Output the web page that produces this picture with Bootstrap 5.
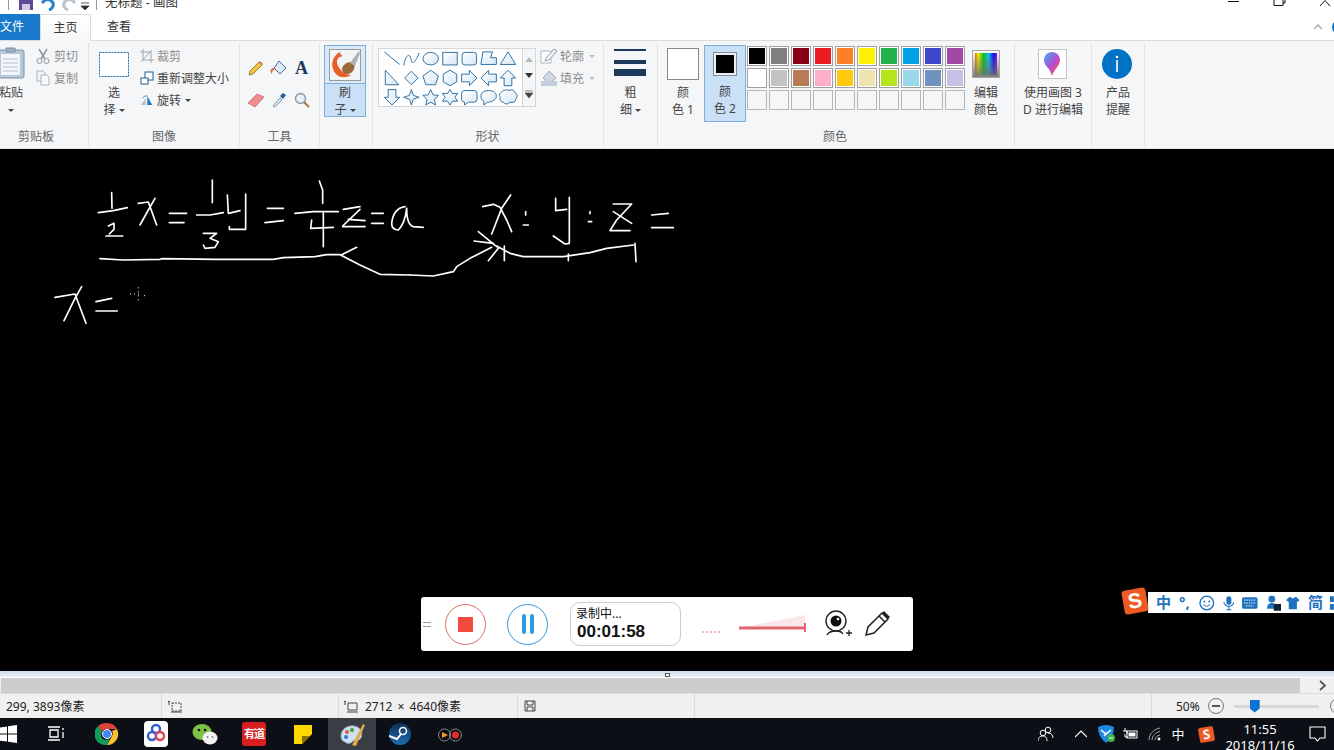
<!DOCTYPE html>
<html lang="zh">
<head>
<meta charset="utf-8">
<title>无标题 - 画图</title>
<link href="https://cdn.jsdelivr.net/npm/bootstrap@5.3.0/dist/css/bootstrap.min.css" rel="stylesheet">
<style>
html,body{height:100%;margin:0;overflow:hidden;background:#000}
body{font-family:"Noto Sans","Noto Sans CJK SC",sans-serif;font-size:12px;color:#444;line-height:17px}
.app{width:1334px;height:750px;overflow:hidden}
.ttl{height:14px;background:#fff;overflow:hidden;flex:none;position:relative}
.ttl-in{margin-top:-9px;height:23px}
.ttl-txt{font-size:12.500px;color:#333;margin-left:8px}
.vbar{width:1px;height:14px;background:#999}
.tabs{height:27px;background:#fff;border-bottom:1px solid #dadbdc;flex:none}
.tb{font-size:12px;height:26px;line-height:26px;text-align:center}
.tb-file{width:40px;background:#1979ca;color:#fff;padding-right:16px;white-space:nowrap}
.tb-home{width:51px;height:27px;background:linear-gradient(#fff,#f5f6f7);border:1px solid #dadbdc;border-bottom:0;color:#333}
.tb-view{margin-left:16px;color:#333}
.rib{height:108px;background:#f5f6f7;flex:none;border-bottom:1px solid #e4e5e6}
.grp{flex:none;height:103px;margin-top:2px;border-right:1px solid #e1e2e3;overflow:visible}
.grp-b{flex:1 1 auto;padding-top:3px;min-height:0}
.grp-l{height:24px;line-height:24px;text-align:center;color:#666;flex:none;margin-bottom:-3px}
.lg{display:flex;flex-direction:column;align-items:center;flex:none}
.lg-i{height:38px;display:flex;align-items:flex-start;justify-content:center;flex:none}
.lg-t{line-height:17px;text-align:center;white-space:nowrap}
.drop{display:inline-block;width:0;height:0;border:3px solid transparent;border-top:3px solid #444;border-bottom:0;margin-left:3px;vertical-align:2px}
.drop-g{border-top-color:#bbb}
.sc{margin-top:-1px}
.si{height:22px;display:flex;align-items:center;gap:4px;white-space:nowrap}
.dis{color:#8d8d8d}
.tgrid{display:grid;grid-template-columns:repeat(3,23px);grid-auto-rows:32px;padding:6px 0 0 4px}
.tgrid>div{display:flex;align-items:center;justify-content:center}
.ab-a{font-family:"Liberation Serif",serif;font-weight:700;font-size:18px;color:#1f3a5f;line-height:20px}
.sel-btn{background:#c9e0f7;border:1px solid #7fb0dc;height:72px;width:42px;margin:2px 0 0 4px}
.sel-top{height:38px;background:#d9e9f9;border-bottom:1px solid #7fb0dc;display:flex;align-items:center;justify-content:center}
.gal{margin:2px 0 0 5px;height:59px;border:1px solid #d4d6d8;background:#fff;flex:none;display:flex}
.gal-s{width:13px;background:#f5f6f7;border-left:1px solid #d4d6d8;display:flex;flex-direction:column;align-items:center;justify-content:space-around;padding:2px 0}
.c1-col{width:42px;margin-left:4px}
.c1-box{width:32px;height:32px;border:1px solid #8a8a8a;background:#fff;margin-top:2px}
.c2-btn{background:#c9e0f7;border:1px solid #7fb0dc;width:42px;height:77px;margin-top:-1px}
.c2-btn .lg-i{height:37px}
.c2-box{width:24px;height:24px;border:1px solid #8a8a8a;background:#000;box-shadow:inset 0 0 0 2px #e8f0f8;margin-top:6px}
.pal{display:grid;grid-template-columns:repeat(10,20px);grid-auto-rows:20px;gap:2px;margin:0 0 0 1px}
.sw{border:1px solid #a0a0a0;box-shadow:inset 0 0 0 1px #fff}
.sw-e{border:1px solid #b4b4b4;background:#f5f6f7;box-shadow:none}
.rb-box{width:28px;height:28px;border:1px solid #a5a5a5;margin-top:4px;background:linear-gradient(90deg,#f00,#ff0,#0c0,#0cf,#00f,#f0f);position:relative;box-shadow:inset 0 0 0 2px #fff}
.rb-sh{display:block;width:100%;height:100%;background:linear-gradient(rgba(255,255,255,0),rgba(110,110,110,.9))}
.p3-box{width:29px;height:30px;border:1px solid #c4c4c4;background:#fff;margin:3px 2px 0 0}
.cv{flex:1 1 auto;background:#000;position:relative;min-height:0}
.cv svg.ink{display:block}
.ink path{fill:none;stroke:#fff;stroke-width:5;stroke-linejoin:round;stroke-linecap:round}
.ink path.dots{stroke-width:3;stroke-linecap:butt;stroke-dasharray:3 9}
.rec{position:absolute;left:421px;top:448px;width:492px;height:54px;background:#fff;border-radius:3px}
.grip{width:8px;margin-left:2px;height:5px;border-top:1px solid #999;border-bottom:1px solid #999;position:relative}
.ring{width:41px;height:41px;border-radius:50%;flex:none;display:flex;align-items:center;justify-content:center;gap:4px}
.ring-r{border:1px solid #df6a63;margin-left:14px}
.ring-b{border:1px solid #2f97d8;margin-left:21px}
.stopq{width:15px;height:15px;background:#f44a3f}
.pb{width:4px;height:20px;background:#2f9be0;border-radius:2px}
.st-box{width:111px;height:44px;border:1px solid #ccc;border-radius:10px;margin-left:22px;padding:3px 5px;flex:none;color:#111}
.st-a{font-size:12px;line-height:15px}
.st-b{font-size:17px;line-height:21px;font-weight:700;color:#111;font-family:"Liberation Sans",sans-serif;margin-left:1px}
.ime{position:absolute;left:1122px;top:439px;width:212px;height:28px}
.ime-bar{position:absolute;left:26px;top:4px;right:0;height:21px;background:#fff;display:flex;align-items:center;gap:8px;padding-left:8px;color:#1e72bd;font-size:15px;font-weight:700;overflow:hidden;white-space:nowrap}
.ime-p{display:inline-block;width:12px;flex:none}
.ime-s{position:absolute;left:1px;top:1px;width:24px;height:24px;background:#ee5a24;border-radius:3px;transform:rotate(-10deg);color:#fff;font-weight:700;font-size:21px;line-height:24px;text-align:center;font-family:"Liberation Sans",sans-serif}
.band{height:6px;background:linear-gradient(#cfdcec,#eaf0f7);flex:none;position:relative}
.hdl{position:absolute;left:665px;top:2px;width:5px;height:4px;background:#fff;border:1px solid #555}
.scr{height:16px;background:#f0f0f0;flex:none;border-top:1px solid #fff}
.thumb{width:1299px;height:15px;margin-left:1px;background:#cdcdcd}
.sts{height:25px;background:#f0f0f0;border-top:1px solid #dcdcdc;flex:none;color:#222;position:relative;white-space:nowrap}
.cellx{height:100%;border-right:1px solid #d9d9d9;flex:none;display:flex;align-items:center}
.wsp{word-spacing:2px}
.zoomtr{position:relative;width:85px;height:3px;background:#d8d8d8;margin-left:10px;flex:none}
.zoomth{position:absolute;left:16px;top:-5px;width:10px;height:13px;background:#0a74d6;clip-path:polygon(0 0,100% 0,100% 70%,50% 100%,0 70%)}
.circ{width:16px;height:16px;border:1px solid #777;border-radius:50%;flex:none;display:flex;align-items:center;justify-content:center}
.circ i{display:block;width:8px;height:2px;background:#555}
.tkb{height:32px;background:#0c1016;flex:none;position:relative;color:#fff}
.tki{position:absolute;top:0;height:32px;display:flex;align-items:center;justify-content:center;width:48px}
.tki-act{background:#3a3e44}
.ydao{width:24px;height:24px;border-radius:3px;background:#d81e1e;color:#fff;font-size:11px;font-weight:700;text-align:center;line-height:24px;letter-spacing:-1px}
.clock{position:absolute;left:1220px;top:3px;width:80px;text-align:center;color:#fff;font-size:13px;line-height:16px}
.imech{font-size:13px;color:#fff}
.sgo{width:15px;height:15px;background:#ee5a24;border-radius:2px;transform:rotate(-10deg);color:#fff;font-size:13px;font-weight:700;text-align:center;line-height:15px}
</style>
</head>
<body>
<div class="app d-flex flex-column">

  <div class="ttl">
    <div class="ttl-in d-flex align-items-center">
      <div class="vbar" style="margin-left:8px"></div>
      <svg width="16" height="16" viewBox="0 0 16 16" style="margin-left:9px"><path d="M1 1H15V15H1Z" fill="#5b4a96"/><path d="M4 9H12V15H4Z" fill="#cfc9e6"/></svg>
      <svg width="16" height="16" viewBox="0 0 16 16" style="margin-left:6px"><path d="M2 8C6 3 11 4 13 8C14 11 12 14 9 15" fill="none" stroke="#2b7fd0" stroke-width="3"/></svg>
      <svg width="16" height="16" viewBox="0 0 16 16" style="margin-left:5px"><path d="M14 8C10 3 5 4 3 8C2 11 4 14 7 15" fill="none" stroke="#b9c4cf" stroke-width="3"/></svg>
      <svg width="8" height="14" viewBox="0 0 8 14" style="margin-left:4px"><path d="M0 7H8M0 10H8L4 14Z" fill="#333" stroke="#333" stroke-width=".8"/></svg>
      <div class="vbar" style="margin-left:7px"></div>
      <span class="ttl-txt">无标题 - 画图</span>
      <svg class="ms-auto" width="110" height="23" viewBox="0 0 110 23"><path d="M4 10.500H15M50 9V14.500H59V9M61 9V12H59" fill="none" stroke="#111"/><path d="M96 15L101 9.500 106 15" fill="none" stroke="#111"/></svg>
    </div>
  </div>

  <div class="tabs d-flex align-items-start">
    <div class="tb tb-file">文件</div>
    <div class="tb tb-home">主页</div>
    <div class="tb tb-view">查看</div>
    <svg class="ms-auto" width="20" height="26" viewBox="0 0 20 26"><path d="M0 15L4 11 8 15" fill="none" stroke="#aaa" stroke-width="1.500"/><circle cx="25" cy="13" r="7" fill="#0b72c4"/></svg>
  </div>

  <div class="rib d-flex">
    <!-- 剪贴板 -->
    <div class="grp d-flex flex-column" style="width:89px">
      <div class="grp-b d-flex">
        <div class="lg" style="width:38px;margin-left:-8px">
          <div class="lg-i"><svg width="30" height="34" viewBox="0 0 30 34"><rect x="1" y="4" width="27" height="28" rx="2" fill="#b9c7db" stroke="#7f8fa6"/><rect x="5" y="8" width="19" height="21" fill="#f2f6fb"/><path d="M7 13H22M7 17H22M7 21H22M7 25H22" stroke="#b4c1d2"/><path d="M10 6V2H19V6Z" fill="#9fb0c6" stroke="#7f8fa6"/></svg></div>
          <div class="lg-t">粘贴<br><span class="drop" style="margin:0"></span></div>
        </div>
        <div class="sc" style="margin-left:6px">
          <div class="si dis"><svg width="14" height="16" viewBox="0 0 14 16"><path d="M3 1L9 11M11 1L5 11" stroke="#8b98a8" stroke-width="1.500"/><circle cx="3.500" cy="13" r="2.500" fill="none" stroke="#8b98a8"/><circle cx="10.500" cy="13" r="2.500" fill="none" stroke="#8b98a8"/></svg><span>剪切</span></div>
          <div class="si dis"><svg width="14" height="16" viewBox="0 0 14 16"><path d="M1 1H7L9 3V11H1Z" fill="#f3f5f7" stroke="#aab4bf"/><path d="M5 5H11L13 7V15H5Z" fill="#f8f9fa" stroke="#aab4bf"/></svg><span>复制</span></div>
        </div>
      </div>
      <div class="grp-l" style="padding-right:16px">剪贴板</div>
    </div>
    <!-- 图像 -->
    <div class="grp d-flex flex-column" style="width:151px">
      <div class="grp-b d-flex">
        <div class="lg" style="width:50px">
          <div class="lg-i"><svg width="32" height="28" viewBox="0 0 32 28" style="margin-top:5px"><rect x="1.500" y="1.500" width="29" height="24" fill="#fff" stroke="#1f6aa8" stroke-dasharray="2 1"/></svg></div>
          <div class="lg-t">选<br>择<span class="drop"></span></div>
        </div>
        <div class="sc" style="margin-left:1px">
          <div class="si dis"><svg width="14" height="14" viewBox="0 0 14 14"><path d="M3 0V11H14M0 3H11V14M1 13L12 1" fill="none" stroke="#9aa6b2"/></svg><span style="margin-left:-1px">裁剪</span></div>
          <div class="si"><svg width="14" height="14" viewBox="0 0 14 14"><rect x="5" y="1" width="8" height="8" fill="#fff" stroke="#1f5f95"/><rect x="1" y="7" width="7" height="6" fill="#fff" stroke="#1f5f95"/></svg><span style="margin-left:-1px">重新调整大小</span></div>
          <div class="si"><svg width="13" height="14" viewBox="0 0 16 14"><path d="M1 13L7 5V13Z" fill="#bbb"/><path d="M9 2L15 13H9Z" fill="#1d76bd"/><path d="M3 5Q5 1 9 2" fill="none" stroke="#1d76bd"/></svg><span>旋转</span><span class="drop" style="margin-left:0"></span></div>
        </div>
      </div>
      <div class="grp-l">图像</div>
    </div>
    <!-- 工具 -->
    <div class="grp d-flex flex-column" style="width:80px">
      <div class="grp-b">
        <div class="tgrid">
          <div><svg width="16" height="16" viewBox="0 0 16 16"><path d="M2 11L11 2 14 5 5 14 1 15Z" fill="#f0c33c" stroke="#8f6f1d" stroke-width=".8"/><path d="M11 2L12 1 15 4 14 5Z" fill="#e26b5b"/></svg></div>
          <div><svg width="18" height="18" viewBox="0 0 18 18"><path d="M9 2L16 9 10 15 4 9Z" fill="#dfeaf5" stroke="#3d6d9c"/><path d="M4 9C0 9 0 13 2 15C2 12 3 11 5 10Z" fill="#e5612c"/></svg></div>
          <div><span class="ab-a">A</span></div>
          <div><svg width="18" height="16" viewBox="0 0 18 16"><path d="M1 11L10 2 17 5 8 15Z" fill="#f08d92" stroke="#c96b70" stroke-width=".8"/></svg></div>
          <div><svg width="16" height="16" viewBox="0 0 16 16"><path d="M2 14L9 6 11 8 4 15Z" fill="#dde6ee" stroke="#6b7f93" stroke-width=".8"/><path d="M9 4L12 1 15 3 12 7Z" fill="#1c5f9d"/></svg></div>
          <div><svg width="16" height="16" viewBox="0 0 16 16"><circle cx="6.500" cy="6.500" r="5" fill="#e7f0f8" stroke="#8a95a0" stroke-width="1.300"/><path d="M10 10L15 15" stroke="#a17b4b" stroke-width="2.200"/></svg></div>
        </div>
      </div>
      <div class="grp-l">工具</div>
    </div>
    <!-- 刷子 -->
    <div class="grp" style="width:53px">
      <div class="sel-btn">
        <div class="sel-top"><svg width="32" height="32" viewBox="0 0 32 32"><rect x=".5" y=".5" width="31" height="31" fill="#f3f4f6" stroke="#9a9a9a"/><path d="M11 3C3 7 0 18 8 26C12 29 18 29 22 26C16 26 8 19 8 13C8 9 10 8 14 7C12 6 11 5 11 3Z" fill="#e5612c"/><path d="M13 19C16 13 21 12 25 15C27 19 23 26 17 25C14 24 13 21 13 19Z" fill="#9a6a3a"/><path d="M21 14L30 2 31 4 26 17Z" fill="#aab1b8"/></svg></div>
        <div class="lg-t">刷<br>子<span class="drop"></span></div>
      </div>
    </div>
    <!-- 形状 -->
    <div class="grp d-flex flex-column" style="width:231px">
      <div class="grp-b d-flex">
        <div class="gal">
          <svg width="143" height="57" viewBox="0 0 143 59">
            <defs><linearGradient id="sf" x1="0" y1="0" x2="1" y2="1"><stop offset="0" stop-color="#fff"/><stop offset="1" stop-color="#d5e7f6"/></linearGradient></defs>
            <g fill="url(#sf)" stroke="#2f6f9f" stroke-width="1">
              <path d="M3 3L19 16" fill="none"/>
              <path d="M23 17C26 3 30 5 31 12C32 18 37 10 39 4" fill="none"/>
              <ellipse cx="51" cy="10" rx="8" ry="6.500"/>
              <rect x="63.500" y="3.500" width="15" height="13"/>
              <rect x="83.500" y="3.500" width="15" height="13" rx="3"/>
              <path d="M103 16L105 3H115L113 9H119V16Z"/>
              <path d="M123 16L131 3L139 16Z"/>
              <path d="M4 22V37H18Z"/>
              <path d="M31 23L38 30L31 37L24 30Z"/>
              <path d="M51 22L59 28L56 37H46L43 28Z"/>
              <path d="M71 22L78 26V34L71 38L64 34V26Z"/>
              <path d="M83 26H91V22L99 30L91 38V34H83Z"/>
              <path d="M119 26H111V22L103 30L111 38V34H119Z"/>
              <path d="M131 22L139 30H135V38H127V30H123Z"/>
              <path d="M7 42H15V50H19L11 58L3 50H7Z"/>
              <path d="M31 42L33 48L39 50L33 52L31 58L29 52L23 50L29 48Z"/>
              <path d="M51 42L53.500 47.500L59 48L55 52L56 58L51 55L46 58L47 52L43 48L48.500 47.500Z"/>
              <path d="M71 42L73.500 46H79L76 50L79 54H73.500L71 58L68.500 54H63L66 50L63 46H68.500Z"/>
              <path d="M86 43H96Q99 43 99 46V52Q99 55 96 55H90L86 58V55Q83 55 83 52V46Q83 43 86 43Z"/>
              <path d="M111 43C117 43 119 46 119 49C119 52 115 55 110 55L106 58L106 54C104 53 103 51 103 49C103 46 105 43 111 43Z"/>
              <path d="M125 44C127 42 130 42 132 43C135 41 138 43 138 45C141 46 141 50 139 52C139 55 136 56 133 55C131 58 127 57 126 55C123 55 122 52 123 50C121 48 123 45 125 44Z"/>
            </g>
          </svg>
          <div class="gal-s">
            <svg width="8" height="5" viewBox="0 0 8 5"><path d="M4 0L8 5H0Z" fill="#bbb"/></svg>
            <svg width="8" height="5" viewBox="0 0 8 5"><path d="M4 5L8 0H0Z" fill="#333"/></svg>
            <svg width="8" height="8" viewBox="0 0 8 8"><path d="M0 1H8M4 8L8 3H0Z" fill="#444" stroke="#444" stroke-width=".6"/></svg>
          </div>
        </div>
        <div class="sc" style="margin-left:4px">
          <div class="si dis" style="gap:2px"><svg width="18" height="16" viewBox="0 0 18 16"><path d="M1 3H11V15H1Z" fill="#fff" stroke="#aab6c2"/><path d="M6 10L14 1 17 3 9 12 5 13Z" fill="#f2f4f6" stroke="#8f9dab"/></svg><span>轮廓</span><span class="drop drop-g"></span></div>
          <div class="si dis" style="gap:2px"><svg width="18" height="16" viewBox="0 0 18 16"><path d="M9 1L16 8 9 14 3 8Z" fill="#cfd8e2" stroke="#9dadbd"/><path d="M1 11H17V16H1Z" fill="#c2cedb"/></svg><span>填充</span><span class="drop drop-g"></span></div>
        </div>
      </div>
      <div class="grp-l" style="margin-left:-1px">形状</div>
    </div>
    <!-- 粗细 -->
    <div class="grp" style="width:54px">
      <div class="grp-b lg">
        <div class="lg-i"><svg width="32" height="29" viewBox="0 0 32 29" style="margin:3px 1px 0 0"><rect y="0" width="32" height="2" fill="#1d3a5c"/><rect y="11" width="32" height="4" fill="#1d3a5c"/><rect y="20" width="32" height="7" fill="#1d3a5c"/></svg></div>
        <div class="lg-t">粗<br>细<span class="drop"></span></div>
      </div>
    </div>
    <!-- 颜色 -->
    <div class="grp d-flex flex-column" style="width:357px">
      <div class="grp-b d-flex">
        <div class="lg c1-col">
          <div class="lg-i"><div class="c1-box"></div></div>
          <div class="lg-t">颜<br>色 1</div>
        </div>
        <div class="c2-btn lg">
          <div class="lg-i"><div class="c2-box"></div></div>
          <div class="lg-t">颜<br>色 2</div>
        </div>
        <div>
          <div class="pal">
            <div class="sw" style="background:#000"></div><div class="sw" style="background:#7f7f7f"></div><div class="sw" style="background:#880015"></div><div class="sw" style="background:#ed1c24"></div><div class="sw" style="background:#ff7f27"></div><div class="sw" style="background:#fff200"></div><div class="sw" style="background:#22b14c"></div><div class="sw" style="background:#00a2e8"></div><div class="sw" style="background:#3f48cc"></div><div class="sw" style="background:#a349a4"></div>
            <div class="sw" style="background:#fff"></div><div class="sw" style="background:#c3c3c3"></div><div class="sw" style="background:#b97a57"></div><div class="sw" style="background:#ffaec9"></div><div class="sw" style="background:#ffc90e"></div><div class="sw" style="background:#efe4b0"></div><div class="sw" style="background:#b5e61d"></div><div class="sw" style="background:#99d9ea"></div><div class="sw" style="background:#7092be"></div><div class="sw" style="background:#c8bfe7"></div>
            <div class="sw sw-e"></div><div class="sw sw-e"></div><div class="sw sw-e"></div><div class="sw sw-e"></div><div class="sw sw-e"></div><div class="sw sw-e"></div><div class="sw sw-e"></div><div class="sw sw-e"></div><div class="sw sw-e"></div><div class="sw sw-e"></div>
          </div>
        </div>
        <div class="lg" style="width:34px;margin-left:4px">
          <div class="lg-i"><div class="rb-box"><span class="rb-sh"></span></div></div>
          <div class="lg-t">编辑<br>颜色</div>
        </div>
      </div>
      <div class="grp-l" style="padding-right:2px">颜色</div>
    </div>
    <!-- 3D -->
    <div class="grp" style="width:77px">
      <div class="grp-b lg">
        <div class="lg-i"><div class="p3-box d-flex align-items-center justify-content-center"><svg width="18" height="26" viewBox="0 0 18 26"><defs><linearGradient id="p3" x1="0" y1="0" x2="1" y2="1"><stop offset="0" stop-color="#37b7f2"/><stop offset=".5" stop-color="#b04fd6"/><stop offset=".8" stop-color="#f0487a"/><stop offset="1" stop-color="#f7b030"/></linearGradient></defs><path d="M9 1C14 1 17 5 17 9C17 15 11 18 9 25C8 22 7 19 5 17C2 14 1 12 1 9C1 5 4 1 9 1Z" fill="url(#p3)"/></svg></div></div>
        <div class="lg-t">使用画图 3<br>D 进行编辑</div>
      </div>
    </div>
    <!-- 提醒 -->
    <div class="grp" style="width:53px">
      <div class="grp-b lg">
        <div class="lg-i"><svg width="30" height="30" viewBox="0 0 30 30" style="margin:3px 2px 0 0"><circle cx="15" cy="15" r="15" fill="#0072c6"/><circle cx="15" cy="8" r="1.300" fill="#fff"/><rect x="14.200" y="11" width="1.600" height="12" fill="#fff"/></svg></div>
        <div class="lg-t">产品<br>提醒</div>
      </div>
    </div>
  </div>

  <div class="cv">
    <svg class="ink" width="1334" height="522" viewBox="0 149 1334 522">
      <g transform="translate(40 170) scale(.33333)">
        <path d="M215 68L216 115M175 128L220 122L262 113M205 168L222 160L222 178L208 192M198 198H248"/>
        <path d="M295 100L325 96L350 165M345 85L325 120L300 165"/>
        <path d="M388 130H440M388 158H432"/>
        <path d="M517 30V98M470 135L510 135L550 128M490 190L530 190L510 205L535 215L525 232L495 235L490 225"/>
        <path d="M562 75L565 130L600 122M617 72V178H568V170"/>
        <path d="M682 115H730M675 158L730 152"/>
        <path d="M838 33L848 60V100M765 130L820 125L895 125M815 150L812 175L880 172M850 130V230"/>
        <path d="M910 118L960 110M960 118L908 168M925 148L975 152M908 170H975"/>
        <path d="M995 130H1030M995 160H1030"/>
        <path d="M1095 110Q1060 115 1055 160Q1055 180 1075 180Q1095 160 1100 115Q1100 165 1120 170L1150 172"/>
        <path d="M180 266L250 270L360 268L365 266L530 268L700 268L730 263L825 260L860 254L900 254M905 254L950 232M900 254L960 285L1020 313L1110 315"/>
        <path d="M45 382L105 372L138 460M125 350L105 385L72 452M168 395L215 385M168 423H232"/>
        <path class="dots" d="M295 352V400M270 372H300M312 377H320"/>
      </g>
      <g transform="translate(410 170) scale(.33333)">
        <path d="M0 315L70 318L130 305L140 290L180 265L245 232"/>
        <path d="M218 110L250 103L270 112L290 150L305 185M302 75L275 115L245 192"/>
        <path d="M347 125V135M340 165H355"/>
        <path d="M437 85V122L470 118M478 82V220L465 222L430 198"/>
        <path d="M540 125V131M535 155H545"/>
        <path d="M610 102H665L620 150L600 182H660M610 125L665 160"/>
        <path d="M725 135L775 130M725 173H790"/>
        <path d="M205 185L260 230M192 213L250 220M235 272L265 235M260 228L300 250L340 260L460 260L540 248L590 235L670 225M675 220L678 275M283 228V272M475 252V272"/>
      </g>
    </svg>

    <div class="rec d-flex align-items-center">
      <div class="grip"></div>
      <div class="ring ring-r"><div class="stopq"></div></div>
      <div class="ring ring-b"><div class="pb"></div><div class="pb"></div></div>
      <div class="st-box">
        <div class="st-a">录制中...</div>
        <div class="st-b">00:01:58</div>
      </div>
      <svg width="120" height="30" viewBox="0 0 120 30" class="flex-none" style="margin-left:21px"><path d="M0 23H18" stroke="#d77" stroke-dasharray="2 2"/><path d="M37 19L103 6V19Z" fill="#fbe6e8"/><path d="M37 19H103" stroke="#e0656f" stroke-width="3"/><path d="M103 14V23" stroke="#e0656f" stroke-width="2"/></svg>
      <svg width="28" height="28" viewBox="0 0 28 28" style="margin-left:2px"><circle cx="12" cy="11" r="10" fill="#fff" stroke="#222" stroke-width="1.400"/><circle cx="12" cy="11" r="5.500" fill="#111"/><circle cx="14" cy="9" r="1.300" fill="#fff"/><path d="M3 25C5 21 9 21 12 21C15 21 18 22 19 24" fill="none" stroke="#222" stroke-width="1.400"/><path d="M22 23H28M25 20V26" stroke="#222" stroke-width="1.300"/></svg>
      <svg width="26" height="26" viewBox="0 0 26 26" style="margin-left:12px"><path d="M2 24L4 16 18 2 24 8 10 22Z" fill="#fff" stroke="#222" stroke-width="1.500"/><path d="M15 5L21 11" stroke="#222" stroke-width="1.500"/><path d="M18 2L20 0 26 6 24 8Z" fill="#222"/></svg>
    </div>

    <div class="ime">
      <div class="ime-bar">
        <span>中</span><span class="ime-p">°,</span>
        <svg width="16" height="16" viewBox="0 0 16 16" class="flex-none"><circle cx="8" cy="8" r="7" fill="none" stroke="#1e72bd" stroke-width="1.400"/><circle cx="5.500" cy="6.500" r="1" fill="#1e72bd"/><circle cx="10.500" cy="6.500" r="1" fill="#1e72bd"/><path d="M4.500 10Q8 13 11.500 10" fill="none" stroke="#1e72bd"/></svg>
        <svg width="12" height="16" viewBox="0 0 14 16" class="flex-none"><rect x="4" y="0" width="6" height="10" rx="3" fill="#1e72bd"/><path d="M1 7Q2 12 7 12Q12 12 13 7M7 12V16M4 16H10" fill="none" stroke="#1e72bd" stroke-width="1.300"/></svg>
        <svg width="16" height="12" viewBox="0 0 16 12" class="flex-none"><rect width="16" height="12" rx="2" fill="#1e72bd"/><path d="M2 3H14M2 6H14M4 9H12" stroke="#fff" stroke-dasharray="1.500 1"/></svg>
        <svg width="16" height="16" viewBox="0 0 16 16" class="flex-none"><circle cx="6" cy="4" r="3.500" fill="#1e72bd"/><path d="M1 14C1 9 4 8 6 8C8 8 11 9 11 14Z" fill="#1e72bd"/><rect x="8" y="9" width="8" height="7" fill="#123"/></svg>
        <svg width="14" height="14" viewBox="0 0 15 14" class="flex-none" style="margin-left:-3px"><path d="M4 0L7.500 2L11 0L15 4L12 6V14H3V6L0 4Z" fill="#1e72bd"/></svg>
        <span>简</span>
        <svg width="4" height="14" viewBox="0 0 4 14" class="flex-none" style="margin-left:-1px"><rect width="4" height="6" fill="#1e72bd"/><rect y="8" width="4" height="6" fill="#1e72bd"/></svg>
      </div>
      <div class="ime-s">S</div>
    </div>
  </div>

  <div class="band"><div class="hdl"></div></div>
  <div class="scr d-flex"><div class="thumb"></div><svg class="ms-auto" width="14" height="15" viewBox="0 0 14 15" style="margin-right:3px"><path d="M3 3L8 7.500 3 12" fill="none" stroke="#555" stroke-width="1.800"/></svg></div>

  <div class="sts d-flex">
    <div class="cellx" style="width:162px;padding-left:6px">299, 3893像素</div>
    <div class="cellx" style="width:177px;padding-left:6px"><svg width="14" height="13" viewBox="0 0 14 13"><path d="M4 3H13V11H4Z" fill="none" stroke="#444" stroke-dasharray="2 1"/><path d="M1 1V5M0 2L1 1 2 2M3 12H14" stroke="#444"/></svg></div>
    <div class="cellx" style="width:179px;padding-left:5px;gap:7px"><svg width="14" height="13" viewBox="0 0 14 13"><path d="M4 3H13V10H4Z" fill="none" stroke="#444"/><path d="M1 1V5M0 2L1 1 2 2M3 12H14" stroke="#444"/></svg><span class="wsp">2712 × 4640像素</span></div>
    <div class="cellx" style="width:177px;padding-left:6px"><svg width="12" height="12" viewBox="0 0 12 12"><path d="M1 1H11V11H1ZM3 1V5H9V1M3 11V7H9V11" fill="none" stroke="#444"/></svg></div>
    <div class="cellx" style="width:457px"></div>
    <div class="d-flex align-items-center" style="padding-left:24px;height:100%">
      <span>50%</span>
      <div class="circ" style="margin-left:8px"><i></i></div>
      <div class="zoomtr"><div class="zoomth"></div></div>
      <div class="circ" style="margin-left:11px"></div>
    </div>
  </div>

  <div class="tkb">
    <div class="tki" style="left:-16px"><svg width="18" height="18" viewBox="0 0 18 18"><path d="M0 2.500L8 1.500V8.500H0ZM9 1.300L18 0V8.500H9ZM0 9.500H8V16.500L0 15.500ZM9 9.500H18V18L9 16.700Z" fill="#fff"/></svg></div>
    <div class="tki" style="left:32px"><svg width="18" height="16" viewBox="0 0 18 16"><path d="M1 1H13M3 4H11V11H3ZM1 14H13M16 2V4M16 6V12" fill="none" stroke="#fff" stroke-width="1.300"/></svg></div>
    <div class="tki" style="left:83px"><svg width="24" height="24" viewBox="0 0 24 24"><path d="M12 1A11 11 0 0 1 22 7H12A5 5 0 0 0 7 10L3 4A11 11 0 0 1 12 1Z" fill="#db4437"/><path d="M22 7A11 11 0 0 1 12 23L17 14A5 5 0 0 0 17 9Z" fill="#fbc02d"/><path d="M3 4A11 11 0 0 0 12 23L15 16A5 5 0 0 1 7 10Z" fill="#0f9d58"/><circle cx="12" cy="12" r="4.500" fill="#4285f4" stroke="#fff"/></svg></div>
    <div class="tki" style="left:132px"><svg width="24" height="26" viewBox="0 0 24 26"><rect width="24" height="26" rx="4" fill="#fff"/><circle cx="12" cy="8" r="4" fill="none" stroke="#2f5fd0" stroke-width="2.400"/><circle cx="8" cy="15" r="4" fill="none" stroke="#2f5fd0" stroke-width="2.400"/><circle cx="16" cy="15" r="4" fill="none" stroke="#e0454f" stroke-width="2.400"/></svg></div>
    <div class="tki" style="left:181px"><svg width="26" height="22" viewBox="0 0 26 22"><ellipse cx="10" cy="9" rx="9.500" ry="8" fill="#7dc142"/><circle cx="7" cy="7" r="1.300" fill="#0c1016"/><circle cx="13" cy="7" r="1.300" fill="#0c1016"/><ellipse cx="18" cy="15" rx="7.500" ry="6.500" fill="#f2f2f2"/><circle cx="15.500" cy="14" r="1" fill="#888"/><circle cx="20.500" cy="14" r="1" fill="#888"/></svg></div>
    <div class="tki" style="left:230px"><div class="ydao">有道</div></div>
    <div class="tki" style="left:279px"><svg width="18" height="19" viewBox="0 0 18 19"><path d="M0 0H18V19H0Z" fill="#ffd800"/><path d="M8 19L18 9V19Z" fill="#0c1016"/><path d="M8 19V11H16Z" fill="#8a6d00"/></svg></div>
    <div class="tki tki-act" style="left:328px"><svg width="26" height="26" viewBox="0 0 26 26"><path d="M2 15C2 8 9 4 15 5C22 6 24 12 22 17C21 20 16 18 14 20C12 23 8 23 6 21C3 20 2 18 2 15Z" fill="#cfe0ee" stroke="#8aa4ba"/><circle cx="8" cy="11" r="2" fill="#e4572e"/><circle cx="13" cy="9" r="2" fill="#3f9b3f"/><circle cx="7" cy="16" r="2" fill="#2a7bd0"/><path d="M13 24L24 3 26 4 17 25Z" fill="#e2a84b"/></svg></div>
    <div class="tki" style="left:376px"><svg width="22" height="22" viewBox="0 0 22 22"><defs><linearGradient id="stm" x1="0" y1="0" x2="0" y2="1"><stop offset="0" stop-color="#0e2f55"/><stop offset="1" stop-color="#1b6fb0"/></linearGradient></defs><circle cx="11" cy="11" r="11" fill="url(#stm)"/><circle cx="14" cy="8" r="3.500" fill="none" stroke="#fff" stroke-width="1.500"/><path d="M0 13L8 16L12 11" fill="none" stroke="#fff" stroke-width="2"/></svg></div>
    <div class="tki" style="left:426px"><svg width="24" height="18" viewBox="0 0 24 18"><circle cx="6.500" cy="10" r="6" fill="none" stroke="#888"/><circle cx="17.500" cy="10" r="6" fill="none" stroke="#888"/><path d="M4 7L10 10 4 13Z" fill="#f39a1f"/><circle cx="17.500" cy="10" r="3.500" fill="#e32b2b"/></svg></div>

    <div class="tki" style="left:1022px"><svg width="16" height="16" viewBox="0 0 16 16"><circle cx="10" cy="4" r="2.800" fill="none" stroke="#fff"/><circle cx="5" cy="7" r="2.800" fill="none" stroke="#fff"/><path d="M0 15C0 11 3 10 5 10C7 10 9 11 9 15M10 7C13 7 15 9 15 12" fill="none" stroke="#fff"/></svg></div>
    <div class="tki" style="left:1057px"><svg width="12" height="8" viewBox="0 0 12 8"><path d="M0 7L6 1 12 7" fill="none" stroke="#fff" stroke-width="1.200"/></svg></div>
    <div class="tki" style="left:1082px"><svg width="17" height="18" viewBox="0 0 17 18"><path d="M0 2Q4 0 8 0Q12 0 16 2Q16 12 8 18Q0 12 0 2Z" fill="#1e88e5"/><path d="M3 5L8 9 13 5M6 11L10 7" fill="none" stroke="#fff" stroke-width="1.500"/><circle cx="13" cy="13" r="4" fill="#3cb44b"/><path d="M11 13H15" stroke="#fff"/></svg></div>
    <div class="tki" style="left:1106px"><svg width="16" height="12" viewBox="0 0 16 12"><path d="M3 0V3M1 3H5V6M3 6V9H6" fill="none" stroke="#fff"/><rect x="5" y="3" width="10" height="7" fill="none" stroke="#fff"/><rect x="6.500" y="4.500" width="7" height="4" fill="#fff"/></svg></div>
    <div class="tki" style="left:1131px"><svg width="14" height="14" viewBox="0 0 14 14"><path d="M1 13C1 7 6 2 12 1M4 13C4 9 8 5 12 4.500M7 13C7 11 9 8.500 12 8" fill="none" stroke="#aaa"/><circle cx="11" cy="12" r="1.400" fill="#fff"/></svg></div>
    <div class="tki imech" style="left:1154px">中</div>
    <div class="tki" style="left:1182px"><div class="sgo">S</div></div>
    <div class="clock">11:55<br>2018/11/16</div>
    <div class="tki" style="left:1293px"><svg width="17" height="16" viewBox="0 0 17 16"><path d="M1 1H16V12H11L8.500 15 6 12H1Z" fill="none" stroke="#fff" stroke-width="1.100"/></svg></div>
  </div>
</div>
</body>
</html>
